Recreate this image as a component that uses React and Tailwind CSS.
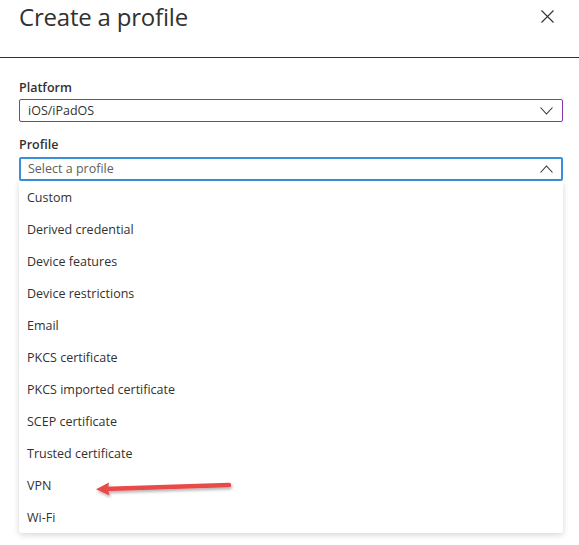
import React from "react";

const items = [
  "Custom",
  "Derived credential",
  "Device features",
  "Device restrictions",
  "Email",
  "PKCS certificate",
  "PKCS imported certificate",
  "SCEP certificate",
  "Trusted certificate",
  "VPN",
  "Wi-Fi",
];

function Chevron({ up }) {
  return (
    <svg width="13" height="8" viewBox="0 0 13 8" className="shrink-0">
      <path
        d={up ? "M0.5 7.5 L6.5 1 L12.5 7.5" : "M0.5 0.5 L6.5 7 L12.5 0.5"}
        fill="none"
        stroke="#323130"
        strokeWidth="1.1"
      />
    </svg>
  );
}

export default function App() {
  return (
    <div
      className="relative w-[579px] h-[545px] bg-white text-[#323130] overflow-hidden"
      style={{ fontFamily: '"Open Sans", "Noto Sans", sans-serif' }}
    >
      <div className="h-[58px] border-b border-[#323130] flex items-start justify-between pl-[19px] pr-[25px]">
        <h1 className="text-[24px] leading-[34px] mt-0 tracking-[-0.2px]">Create a profile</h1>
        <svg width="13" height="13" viewBox="0 0 13 13" className="mt-[10px]">
          <path d="M0.5 0.5 L12.5 12.5 M12.5 0.5 L0.5 12.5" stroke="#323130" strokeWidth="1.1" fill="none" />
        </svg>
      </div>

      <div className="px-[19px] pr-[16px]">
        <div className="mt-[20px] text-[12.5px] leading-[20px] font-semibold">Platform</div>
        <div className="mt-[1px] h-[23px] border border-[#8a35a8] rounded-[2px] flex items-center justify-between pl-[8px] pr-[9px]">
          <span className="text-[12.5px] leading-[20px]">iOS/iPadOS</span>
          <Chevron />
        </div>

        <div className="mt-[13px] text-[12.5px] leading-[20px] font-semibold">Profile</div>
        <div className="mt-[2px] h-[24px] border-2 border-[#3a8fdb] rounded-[2px] flex items-center justify-between pl-[7px] pr-[8px]">
          <span className="text-[12.5px] leading-[20px] text-[#605e5c]">Select a profile</span>
          <Chevron up />
        </div>

        <div className="bg-white rounded-b-[3px] shadow-[0_2px_6px_rgba(0,0,0,0.16)]">
          {items.map((it) => (
            <div key={it} className="h-[32px] flex items-center pl-[8px] pt-[2px] text-[12.5px]">
              {it}
            </div>
          ))}
        </div>
      </div>

      <svg
        className="absolute left-[90px] top-[476px]"
        width="150"
        height="24"
        viewBox="0 0 150 24"
      >
        <defs>
          <filter id="sh" x="-10%" y="-50%" width="120%" height="200%">
            <feDropShadow dx="1" dy="2" stdDeviation="1.5" floodColor="#000" floodOpacity="0.3" />
          </filter>
        </defs>
        <g filter="url(#sh)">
          <path d="M14 13 L139 9" stroke="#e84a4a" strokeWidth="4.5" strokeLinecap="round" fill="none" />
          <path d="M6 13.3 L19 6.5 L18 13 L19.5 19.5 Z" fill="#e84a4a" />
        </g>
      </svg>
    </div>
  );
}
